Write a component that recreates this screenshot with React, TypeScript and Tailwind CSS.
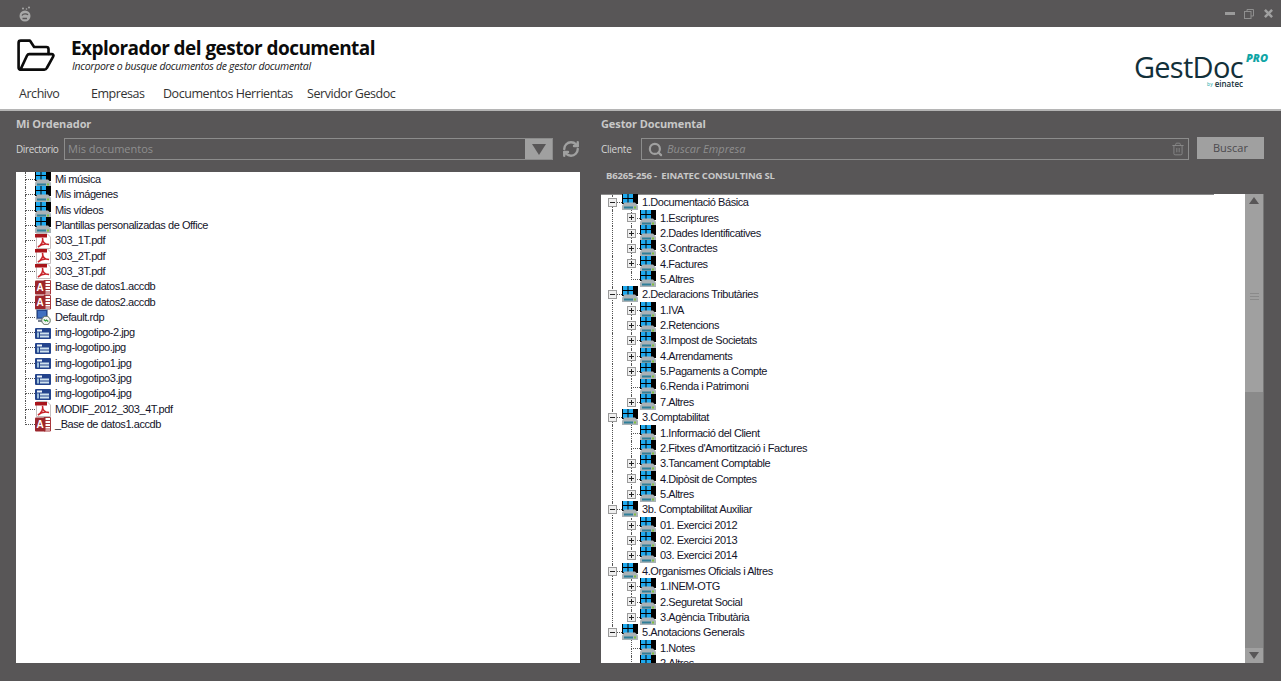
import { RefreshCw, Search, Trash2 } from 'lucide-react';

type Kind = 'drive' | 'pdf' | 'access' | 'image' | 'rdp';

const localFiles: { name: string; kind: Kind }[] = [
  { name: 'Mi música', kind: 'drive' },
  { name: 'Mis imágenes', kind: 'drive' },
  { name: 'Mis vídeos', kind: 'drive' },
  { name: 'Plantillas personalizadas de Office', kind: 'drive' },
  { name: '303_1T.pdf', kind: 'pdf' },
  { name: '303_2T.pdf', kind: 'pdf' },
  { name: '303_3T.pdf', kind: 'pdf' },
  { name: 'Base de datos1.accdb', kind: 'access' },
  { name: 'Base de datos2.accdb', kind: 'access' },
  { name: 'Default.rdp', kind: 'rdp' },
  { name: 'img-logotipo-2.jpg', kind: 'image' },
  { name: 'img-logotipo.jpg', kind: 'image' },
  { name: 'img-logotipo1.jpg', kind: 'image' },
  { name: 'img-logotipo3.jpg', kind: 'image' },
  { name: 'img-logotipo4.jpg', kind: 'image' },
  { name: 'MODIF_2012_303_4T.pdf', kind: 'pdf' },
  { name: '_Base de datos1.accdb', kind: 'access' },
];

// children starting with "!" have no expand box
const folders: { name: string; children: string[] }[] = [
  { name: '1.Documentació Básica', children: ['1.Escriptures', '2.Dades Identificatives', '3.Contractes', '4.Factures', '!5.Altres'] },
  { name: '2.Declaracions Tributàries', children: ['1.IVA', '2.Retencions', '3.Impost de Societats', '4.Arrendaments', '5.Pagaments a Compte', '!6.Renda i Patrimoni', '7.Altres'] },
  { name: '3.Comptabilitat', children: ['!1.Informació del Client', "!2.Fitxes d'Amortització i Factures", '3.Tancament Comptable', '4.Dipòsit de Comptes', '5.Altres'] },
  { name: '3b. Comptabilitat Auxiliar', children: ['01. Exercici 2012', '02. Exercici 2013', '03. Exercici 2014'] },
  { name: '4.Organismes Oficials i Altres', children: ['1.INEM-OTG', '2.Seguretat Social', '3.Agència Tributària'] },
  { name: '5.Anotacions Generals', children: ['!1.Notes', '!2.Altres'] },
];

function FileIcon({ kind }: { kind: Kind }) {
  if (kind === 'pdf') {
    return (
      <svg width="16" height="16" viewBox="0 0 16 16" className="relative shrink-0">
        <path d="M1.5 .5H12L15.5 4V15.5H1.5Z" fill="#fff" stroke="#c4bcbc" />
        <rect x="0" y="1" width="12" height="3.5" fill="#a8141a" />
        <path d="M3 14C6.5 12 8.5 8 7.5 5C7.5 9 10 11.5 14 11.5C10 10.5 6 11.5 3 14Z" fill="none" stroke="#c9242b" strokeWidth="1.5" />
      </svg>
    );
  }
  if (kind === 'access') {
    return (
      <svg width="16" height="16" viewBox="0 0 16 16" className="relative shrink-0">
        <path d="M9 1.5H15.5V15H9Z" fill="#fff" stroke="#a8383c" />
        <path d="M10 4.5H15M10 7.5H15M10 10.5H15M10 13H15" stroke="#a8383c" />
        <rect x="0" y="1.5" width="10.5" height="14" rx="1" fill="#9c262c" />
        <text x="5.2" y="12.2" textAnchor="middle" fontSize="10" fontWeight="700" fill="#fff" fontFamily="Liberation Sans, sans-serif">A</text>
      </svg>
    );
  }
  if (kind === 'image') {
    return (
      <svg width="16" height="16" viewBox="0 0 16 16" className="relative shrink-0">
        <rect x="0" y="3" width="16" height="11" rx="1" fill="#23438c" />
        <rect x="2" y="4.5" width="5" height="2" fill="#eef5f9" />
        <rect x="5" y="7.5" width="9" height="2" fill="#cfe2ee" />
        <rect x="5" y="10.5" width="9" height="2" fill="#cfe2ee" />
        <rect x="2" y="7.5" width="2" height="5" fill="#9ec0da" />
      </svg>
    );
  }
  if (kind === 'rdp') {
    return (
      <svg width="16" height="16" viewBox="0 0 16 16" className="relative shrink-0">
        <rect x="1.5" y="0.5" width="11" height="9.5" fill="#24468f" stroke="#8a97ad" />
        <rect x="3" y="2" width="8" height="6.5" fill="#3f6fc0" />
        <path d="M3 11H9V13H3Z" fill="#7a8290" />
        <circle cx="11" cy="11.5" r="4.3" fill="#f2f2f2" stroke="#5f6f5f" />
        <path d="M8.8 10.5L11 12.2M13.3 12.5L11 10.8" stroke="#2c9c35" strokeWidth="1.4" />
      </svg>
    );
  }
  return (
    <svg width="16" height="17" viewBox="0 0 16 17" className="relative shrink-0">
      <rect x="0" y="0" width="16" height="10" fill="#000" />
      <rect x="1" y="0" width="4.5" height="4" fill="#1ea9ee" />
      <rect x="6.5" y="0" width="4.5" height="4" fill="#1ea9ee" />
      <rect x="1" y="5" width="4.5" height="4" fill="#1ea9ee" />
      <rect x="6.5" y="5" width="4.5" height="4" fill="#1ea9ee" />
      <path d="M2.5 8.5H13L16 11.5V16H0V11.5Z" fill="#a9b2b6" />
      <rect x="2" y="12.5" width="9" height="2" fill="#2f7f99" />
      <rect x="12" y="12.5" width="2" height="2" fill="#7fbf3f" />
    </svg>
  );
}

// dotted elbow that joins a node to its parent
function Elbow({ width, last, box }: { width: string; last?: boolean; box?: '+' | '-' }) {
  return (
    <span className={`relative flex h-full shrink-0 flex-col ${width}`}>
      <span className="flex-1 border-b border-l border-dotted border-[#555]" />
      <span className={`flex-1 border-dotted border-[#555] ${last ? '' : 'border-l'}`} />
      {box && (
        <span className="absolute left-[-4px] top-[3px] flex h-[9px] w-[9px] items-center justify-center border border-[#9a9a9a] bg-[#efefef]">
          <span className="relative block h-px w-[5px] bg-[#222]">
            {box === '+' && <span className="absolute left-[2px] top-[-2px] block h-[5px] w-px bg-[#222]" />}
          </span>
        </span>
      )}
    </span>
  );
}

function NodeText({ children }: { children: string }) {
  return (
    <span className="ml-[4px] whitespace-nowrap font-['Liberation_Sans',sans-serif] text-[11px] leading-none tracking-[-0.43px] text-[#14142a]">{children}</span>
  );
}

function LocalTree() {
  return (
    <div className="flex h-[491px] flex-col overflow-hidden bg-white pl-[9px]">
      {localFiles.map((f, i) => (
        <div key={f.name} className="flex h-[15.3px] shrink-0 items-center">
          <Elbow width="w-[10px]" last={i === localFiles.length - 1} />
          <FileIcon kind={f.kind} />
          <NodeText>{f.name}</NodeText>
        </div>
      ))}
    </div>
  );
}

function RemoteTree() {
  return (
    <div className="min-w-0 flex-1 overflow-hidden bg-white">
      <div className="h-px w-[613px] bg-[#8a8a8a]" />
      {folders.map((folder, fi) => {
        const lastRoot = fi === folders.length - 1;
        return (
          <div key={folder.name}>
            <div className="flex h-[15.37px] items-center pl-[11px]">
              <Elbow width="w-[10px]" box="-" last={lastRoot} />
              <FileIcon kind="drive" />
              <NodeText>{folder.name}</NodeText>
            </div>
            {folder.children.map((raw, ci) => {
              const leaf = raw.startsWith('!');
              return (
                <div key={raw} className="flex h-[15.37px] items-center pl-[11px]">
                  <span className={`h-full w-[19px] shrink-0 border-dotted border-[#555] ${lastRoot ? '' : 'border-l'}`} />
                  <Elbow
                    width="w-[9px]"
                    box={leaf ? undefined : '+'}
                    last={ci === folder.children.length - 1}
                  />
                  <FileIcon kind="drive" />
                  <NodeText>{leaf ? raw.slice(1) : raw}</NodeText>
                </div>
              );
            })}
          </div>
        );
      })}
    </div>
  );
}

function Scrollbar() {
  return (
    <div className="flex w-[19px] shrink-0 flex-col border-r border-[#777] bg-[#8a8a8a]">
      <div className="flex h-[198px] flex-col items-center bg-[#a0a0a0] pt-[3px]">
        <span className="h-0 w-0 border-x-[5px] border-b-[7px] border-x-transparent border-b-[#585657]" />
        <span className="mt-[89px] flex flex-col gap-[2px]">
          <span className="block h-px w-[9px] bg-[#8a8a8a]" />
          <span className="block h-px w-[9px] bg-[#8a8a8a]" />
          <span className="block h-px w-[9px] bg-[#8a8a8a]" />
        </span>
      </div>
      <div className="mt-auto flex h-[15px] items-center justify-center bg-[#a0a0a0]">
        <span className="h-0 w-0 border-x-[5px] border-t-[7px] border-x-transparent border-t-[#585657]" />
      </div>
    </div>
  );
}

export default function App() {
  return (
    <div className="flex h-[681px] w-full flex-col overflow-hidden bg-[#585657] font-['Open_Sans',sans-serif]">
      {/* Title bar */}
      <div className="flex h-[27px] shrink-0 items-center justify-between pl-[18px] pr-[8px]">
        <svg width="14" height="16" viewBox="0 0 14 16">
          <circle cx="7" cy="10" r="5.5" fill="#a8a8a8" />
          <path d="M4 9.5C5 7.5 9 7.5 10 9M4.5 12.5H9" stroke="#585657" strokeWidth="1.3" fill="none" />
          <circle cx="5" cy="2.5" r="1" fill="#a8a8a8" />
          <circle cx="11" cy="1.5" r="1" fill="#a8a8a8" />
          <circle cx="8.5" cy="3" r="0.8" fill="#a8a8a8" />
        </svg>
        <div className="flex items-center gap-[9px]">
          <span className="block h-[3px] w-[10px] bg-[#9a9a9a]" />
          <svg width="10" height="10" viewBox="0 0 10 10" fill="none" stroke="#8f8f8f">
            <rect x="0.5" y="2.5" width="6.5" height="7" />
            <path d="M3 2.5V.5H9.5V7H7" />
          </svg>
          <svg width="9" height="9" viewBox="0 0 10 10" stroke="#a0a0a0" strokeWidth="2.8" className="ml-[1px]">
            <path d="M1 1L9 9M9 1L1 9" />
          </svg>
        </div>
      </div>

      {/* Header */}
      <header className="h-[84px] shrink-0 border-b-2 border-[#b5b5b5] bg-white">
        <div className="flex h-[48px] items-start justify-between">
          <div className="flex items-center pl-[17px] pt-[10px]">
            <svg width="38" height="32" viewBox="0 0 40 34" fill="none" stroke="#0b0b0b" strokeWidth="2.8" strokeLinejoin="round" strokeLinecap="round">
              <path d="M3.5 32.5C2.3 32.5 1.5 31.6 1.5 30.5V4C1.5 2.6 2.4 1.7 3.8 1.7H13.5L18 8.5H31C32.4 8.5 33.3 9.4 33.3 10.8V15.8" />
              <path d="M3.5 32.5L10.5 17.5C11 16.5 11.7 16 12.8 16H36.5C38.3 16 39 17.3 38.2 18.7L31.5 30.8C30.9 32 30 32.5 28.8 32.5Z" />
            </svg>
            <div className="ml-[16px] flex flex-col">
              <h1 className="text-[19px] font-bold leading-[22px] tracking-[-0.55px] text-[#0b0b0b]">Explorador del gestor documental</h1>
              <p className="mt-[1px] pl-[1px] text-[10.5px] italic leading-[13px] tracking-[-0.3px] text-[#222]">Incorpore o busque documentos de gestor documental</p>
            </div>
          </div>
          <div className="mt-[26px] flex flex-col items-end pr-[13px]">
            <div className="flex items-start">
              <span className="text-[29px] font-medium leading-[28px] tracking-[-0.7px] text-[#12303a]">GestDoc</span>
              <span className="ml-[3px] mt-[-3px] text-[11px] font-extrabold italic leading-[15px] text-[#0fa5a5]">PRO</span>
            </div>
            <span className="mr-[25px] flex items-center text-[8px] font-semibold leading-[6px] text-[#12303a]">
              <span className="mr-[2px] text-[5px] font-normal text-[#0fa5a5]">by</span>einatec
            </span>
          </div>
        </div>
        <nav className="flex items-center pl-[19px] pt-[5px] text-[12.5px] leading-[28px] tracking-[-0.45px] text-[#333]">
          <span className="w-[72px]">Archivo</span>
          <span className="w-[72px]">Empresas</span>
          <span className="w-[144px]">Documentos Herrientas</span>
          <span>Servidor Gesdoc</span>
        </nav>
      </header>

      {/* Panels */}
      <main className="flex min-h-0 flex-1 gap-[21px] pl-[16px] pr-[17px]">
        <section className="flex w-[564px] shrink-0 flex-col">
          <h2 className="pt-[5px] text-[11px] font-bold leading-[15px] tracking-[-0.1px] text-[#c8c8c8]">Mi Ordenador</h2>
          <div className="mt-[7px] flex h-[22px] items-center">
            <span className="w-[48px] shrink-0 text-[10px] tracking-[-0.4px] text-[#d5d5d5]">Directorio</span>
            <div className="flex h-full min-w-0 flex-1 items-center border border-[#8c8c8c]">
              <span className="flex-1 pl-[3px] text-[11px] text-[#8f8f8f]">Mis documentos</span>
              <span className="flex h-full w-[27px] items-center justify-center bg-[#a0a0a0]">
                <span className="h-0 w-0 border-x-[7px] border-t-[11px] border-x-transparent border-t-[#585657]" />
              </span>
            </div>
            <RefreshCw className="ml-[9px] h-[18px] w-[18px] shrink-0 text-[#a0a0a0]" strokeWidth={3.2} />
          </div>
          <div className="mt-[12px]">
            <LocalTree />
          </div>
        </section>

        <section className="flex min-w-0 flex-1 flex-col">
          <h2 className="pt-[5px] text-[11px] font-bold leading-[15px] tracking-[-0.1px] text-[#c8c8c8]">Gestor Documental</h2>
          <div className="mt-[7px] flex h-[22px] items-center">
            <span className="w-[40px] shrink-0 text-[10px] tracking-[-0.25px] text-[#d5d5d5]">Cliente</span>
            <div className="flex h-full min-w-0 flex-1 items-center border border-[#8c8c8c] pl-[6px] pr-[3px]">
              <Search className="h-[15px] w-[15px] shrink-0 text-[#a0a0a0]" strokeWidth={3.5} />
              <span className="ml-[4px] flex-1 text-[11px] italic text-[#8f8f8f]">Buscar Empresa</span>
              <Trash2 className="h-[14px] w-[14px] text-[#8a8a8a]" strokeWidth={1.5} />
            </div>
            <button className="mb-[2px] ml-[8px] flex h-[22px] w-[67px] shrink-0 items-center justify-center bg-[#a0a0a0] text-[11px] text-[#4c4a4e]">
              Buscar
            </button>
          </div>
          <p className="mb-[10px] mt-[7px] h-[17px] whitespace-pre pl-[5px] text-[9.5px] font-bold leading-[17px] tracking-[-0.2px] text-[#c8c8c8]">B6265-256 -  EINATEC CONSULTING SL</p>
          <div className="flex h-[469px] shrink-0">
            <RemoteTree />
            <Scrollbar />
          </div>
        </section>
      </main>
    </div>
  );
}
